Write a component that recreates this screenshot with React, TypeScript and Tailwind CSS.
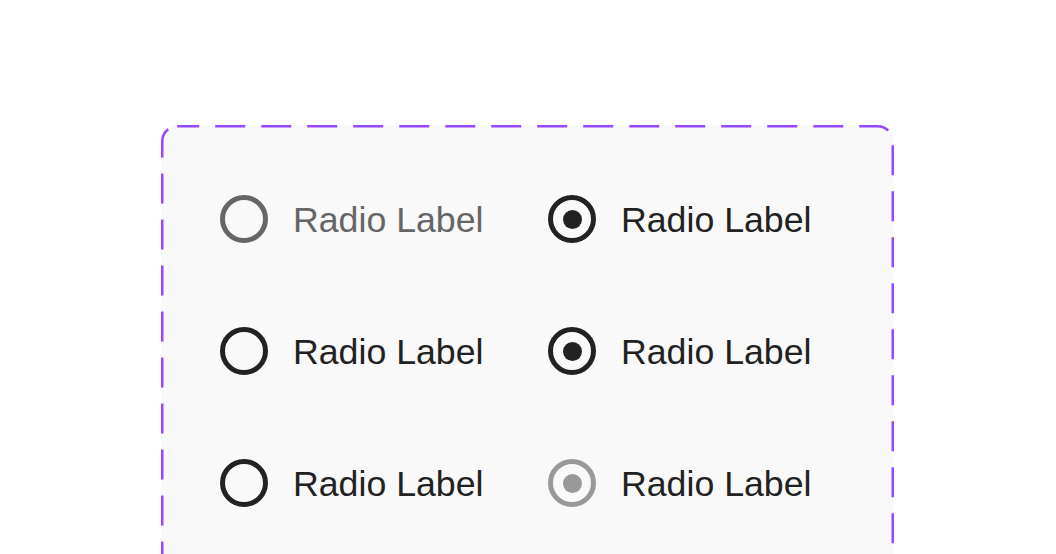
import React from "react";

type Variant = "unchecked-muted" | "unchecked" | "checked" | "checked-disabled";

const items: { variant: Variant }[][] = [
  [{ variant: "unchecked-muted" }, { variant: "checked" }],
  [{ variant: "unchecked" }, { variant: "checked" }],
  [{ variant: "unchecked" }, { variant: "checked-disabled" }],
];

function Radio({ variant }: { variant: Variant }) {
  if (variant === "unchecked-muted") {
    return <div className="w-12 h-12 rounded-full border-[5px] border-[#666666] shrink-0" />;
  }
  if (variant === "unchecked") {
    return <div className="w-12 h-12 rounded-full border-[5px] border-[#222222] shrink-0" />;
  }
  if (variant === "checked") {
    return (
      <div className="w-12 h-12 rounded-full border-[5px] border-[#222222] shrink-0 flex items-center justify-center">
        <div className="w-[19px] h-[19px] rounded-full bg-[#222222]" />
      </div>
    );
  }
  return (
    <div className="w-12 h-12 rounded-full border-[5px] border-[#999999] shrink-0 flex items-center justify-center">
      <div className="w-[19px] h-[19px] rounded-full bg-[#999999]" />
    </div>
  );
}

function Item({ variant }: { variant: Variant }) {
  return (
    <div className="flex items-center gap-[25px]">
      <Radio variant={variant} />
      <span
        className={
          "font-['Liberation_Sans',Arial,sans-serif] text-[35.7px] leading-none whitespace-nowrap pt-[4px] " +
          (variant === "unchecked-muted" ? "text-[#666666]" : "text-[#222222]")
        }
      >
        Radio Label
      </span>
    </div>
  );
}

export default function App() {
  return (
    <div className="w-[1056px] h-[554px] overflow-hidden bg-white pt-[125px] pl-[161px]">
      <div className="relative w-[733px] h-[520px] rounded-[16px] bg-[#f9f9f9] pt-[70px] pl-[59px]">
        <svg
          className="absolute inset-0 pointer-events-none"
          width="733"
          height="520"
          viewBox="0 0 733 520"
        >
          <rect
            x="1.25"
            y="1.25"
            width="730.5"
            height="517.5"
            rx="15"
            ry="15"
            fill="none"
            stroke="#9747FF"
            strokeWidth="2.5"
            strokeDasharray="30 16"
            strokeDashoffset="8"
          />
        </svg>
        <div className="grid grid-cols-[328px_auto] gap-y-[84px]">
          {items.map((row, i) => (
            <React.Fragment key={i}>
              {row.map((it, j) => (
                <Item key={j} variant={it.variant} />
              ))}
            </React.Fragment>
          ))}
        </div>
      </div>
    </div>
  );
}
